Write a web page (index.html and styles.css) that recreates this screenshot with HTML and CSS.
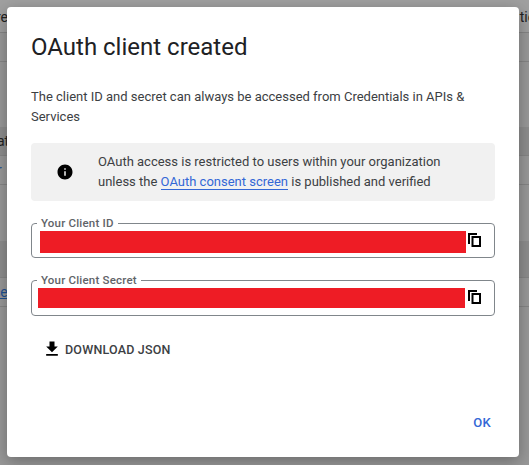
FILE: index.html
```html
<!DOCTYPE html>
<html lang="en">
<head>
    <meta charset="UTF-8">
    <title>OAuth client created</title>
    <link rel="stylesheet" href="styles.css">
</head>
<body>

    <div class="page">
        <div class="row row-head"><span class="cut-re">re</span><span class="cut-tic">tic</span></div>
        <div class="row row-plain"></div>
        <div class="row row-gap"></div>
        <div class="row row-band"><span class="cut-at">at</span></div>
        <div class="row row-link"><a class="cut-r">r</a></div>
        <div class="row row-gap-small"></div>
        <div class="row row-band-tall"></div>
        <div class="row row-link"><a class="cut-ce">ce</a></div>
    </div>

    <div class="dialog">
        <h1>OAuth client created</h1>
        <p class="intro">The client ID and secret can always be accessed from Credentials in APIs &amp; Services</p>

        <div class="note">
            <svg class="note-icon" viewBox="0 0 24 24" width="18" height="18">
                <path d="M12 2C6.48 2 2 6.48 2 12s4.48 10 10 10 10-4.48 10-10S17.52 2 12 2zm1 15h-2v-6h2v6zm0-8h-2V7h2v2z"/>
            </svg>
            <p>OAuth access is restricted to users within your organization unless the <a href="#">OAuth consent screen</a> is published and verified</p>
        </div>

        <fieldset class="field field-id">
            <legend>Your Client ID</legend>
            <div class="redacted"></div>
            <svg class="copy" viewBox="0 0 13 14" width="13" height="14">
                <path d="M1 11V1h8M4.5 4H12v9H4.5z"/>
            </svg>
        </fieldset>

        <fieldset class="field field-secret">
            <legend>Your Client Secret</legend>
            <div class="redacted"></div>
            <svg class="copy" viewBox="0 0 13 14" width="13" height="14">
                <path d="M1 11V1h8M4.5 4H12v9H4.5z"/>
            </svg>
        </fieldset>

        <div class="download">
            <svg viewBox="0 0 24 24" width="20" height="20">
                <path d="M19 9h-4V3H9v6H5l7 7 7-7zM5 18v2h14v-2H5z"/>
            </svg>
            <span>DOWNLOAD JSON</span>
        </div>

        <div class="actions">
            <span class="ok">OK</span>
        </div>
    </div>

</body>
</html>
```

FILE: styles.css
```css
* {
    box-sizing: border-box;
}
html, body {
    height: 100%;
}
body {
    margin: 0;
    overflow: hidden;
    background-color: #989898;
    font-family: Roboto, "Liberation Sans", sans-serif;
    color: #3c4043;
}
.page {
    height: 465px;
    overflow: hidden;
    font-size: 14px;
    color: #222;
}
.row {
    display: flex;
    justify-content: space-between;
    border-bottom: 1px solid #858585;
}
.row a {
    color: #1d4f91;
    text-decoration: underline;
}
.cut-re {
    margin-left: -4px;
}
.cut-tic {
    margin-right: -6px;
}
.cut-at {
    margin-left: -3px;
}
.cut-r {
    margin-left: -3px;
    text-decoration: none !important;
}
.cut-ce {
    margin-left: -7px;
}
.row-head {
    height: 33px;
    padding-top: 9px;
    background-color: #a0a0a0;
}
.row-plain {
    height: 29px;
}
.row-gap {
    height: 65px;
    border-bottom: 0;
}
.row-band {
    height: 29px;
    padding-top: 6px;
    background-color: #8d8d8d;
}
.row-link {
    height: 29px;
    padding-top: 6px;
}
.row-gap-small {
    height: 56px;
    border-bottom: 0;
}
.row-band-tall {
    height: 37px;
    background-color: #8d8d8d;
}
.dialog {
    position: absolute;
    left: 7px;
    top: 7px;
    width: 512px;
    height: 450px;
    padding: 24px;
    display: flex;
    flex-direction: column;
    background: #fff;
    border-radius: 4px;
    box-shadow: 0 4px 16px rgba(0,0,0,0.3);
}
h1 {
    margin: 0;
    font-size: 24px;
    font-weight: 400;
    line-height: 32px;
    color: #202124;
}
.intro {
    margin: 24px 0 0;
    font-size: 13px;
    line-height: 20px;
}
.note {
    display: flex;
    align-items: center;
    height: 58px;
    margin-top: 16px;
    background-color: #f1f1f1;
    border-radius: 4px;
}
.note-icon {
    flex: none;
    margin: 0 24px 0 25px;
}
.note p {
    margin: 0;
    width: 360px;
    font-size: 13px;
    line-height: 20px;
}
.note a {
    color: #3367d6;
    text-decoration: none;
    border-bottom: 1px solid #3367d6;
}
.field {
    position: relative;
    display: block;
    width: 464px;
    margin: 0;
    padding: 0;
    border: 1px solid #80868b;
    border-radius: 4px;
}
.field-id {
    height: 41px;
    margin-top: 16px;
}
.field-secret {
    height: 42px;
    margin-top: 16px;
}
.field legend {
    margin-left: 5px;
    padding: 0 4px;
    font-size: 11.5px;
    font-weight: 500;
    line-height: 13px;
    color: #5f6368;
    letter-spacing: 0.2px;
}
.redacted {
    position: absolute;
    background-color: #ee1c25;
}
.field-id .redacted {
    left: 8px;
    top: 1px;
    width: 426px;
    height: 22px;
}
.field-secret .redacted {
    left: 6px;
    top: 1px;
    width: 427px;
    height: 20px;
}
.copy {
    position: absolute;
    left: 436px;
    top: 3px;
}
.copy path {
    fill: none;
    stroke: #000;
    stroke-width: 2;
}
.download {
    display: flex;
    align-items: center;
    gap: 3px;
    margin-top: 23px;
    margin-left: 11px;
    font-size: 12.5px;
    font-weight: 500;
    letter-spacing: 0.2px;
    color: #3c4043;
}
.actions {
    margin-top: auto;
    display: flex;
    justify-content: flex-end;
    padding-right: 4px;
    padding-bottom: 3px;
}
.ok {
    font-size: 13px;
    font-weight: 500;
    color: #3367d6;
    letter-spacing: 0.3px;
}
```
